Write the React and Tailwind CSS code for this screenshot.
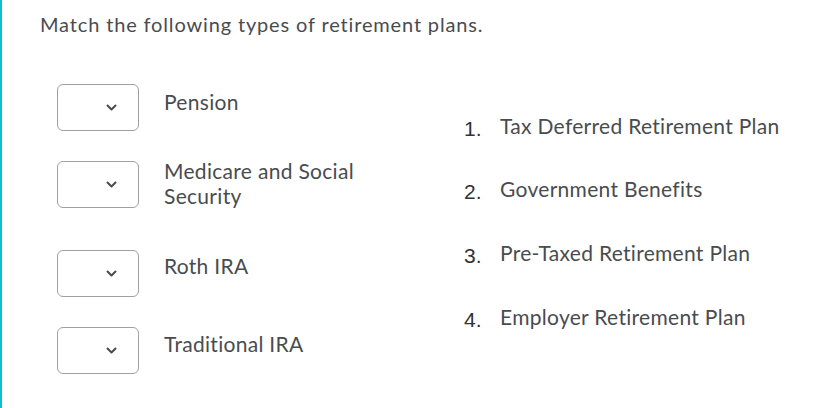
function Chevron(){
return(
<svg width="11" height="7" viewBox="0 0 11 7" fill="none">
<polyline points="1.5,1.5 5.5,5.5 9.5,1.5" stroke="#494c4e" strokeWidth="2" strokeLinecap="round" strokeLinejoin="round" />
</svg>
)
}

function Select(){
return(
<div className="w-[82px] h-[47px] shrink-0 rounded-[6px] border border-[#9ea0a2] bg-white flex items-center justify-end pr-[21px]">
<Chevron />
</div>
)
}

const rows = [
{ label: ["Pension"], mt: "mt-0", lt: "mt-[5px]" },
{ label: ["Medicare and Social", "Security"], mt: "mt-[30px]", lt: "mt-[-3px]" },
{ label: ["Roth IRA"], mt: "mt-[42px]", lt: "mt-[3px]" },
{ label: ["Traditional IRA"], mt: "mt-[30px]", lt: "mt-[4px]" },
]

const answers = [
"Tax Deferred Retirement Plan",
"Government Benefits",
"Pre-Taxed Retirement Plan",
"Employer Retirement Plan",
]

export default function App(){

return(

<div className="w-[829px] h-[408px] bg-white flex overflow-hidden [font-variant-ligatures:none]" style={{fontFamily: "Lato, 'Noto Sans', sans-serif"}}>

<div className="w-[2px] bg-[#0bbfd2] shrink-0"></div>

<div className="pl-[38px] pt-[12px] text-[#494c4e]">

<h1 className="text-[20px] leading-[24px] tracking-[0.85px] font-normal">
Match the following types of retirement plans.
</h1>

<div className="flex items-start">

{/* left column */}

<div className="w-[424px] pl-[17px] mt-[48px] flex flex-col">

{rows.map((r, i) => (
<div key={i} className={"flex items-start gap-[25px] " + r.mt}>
<Select />
<div className={"text-[21px] leading-[25px] tracking-[0.3px] " + r.lt}>
{r.label.map((l, j) => <div key={j}>{l}</div>)}
</div>
</div>
))}

</div>

{/* right column */}

<div className="mt-[76.5px] flex flex-col">

{answers.map((a, i) => (
<div key={i} className="flex items-start h-[63.7px]">
<div className="w-[36px] text-[21px] leading-[25px] mt-[3px] text-[#303234]" style={{fontFamily: "'Liberation Sans', Arial, sans-serif"}}>
{i + 1}.
</div>
<div className="text-[21px] leading-[25px] tracking-[0.3px]">
{a}
</div>
</div>
))}

</div>

</div>

</div>

</div>

)

}
